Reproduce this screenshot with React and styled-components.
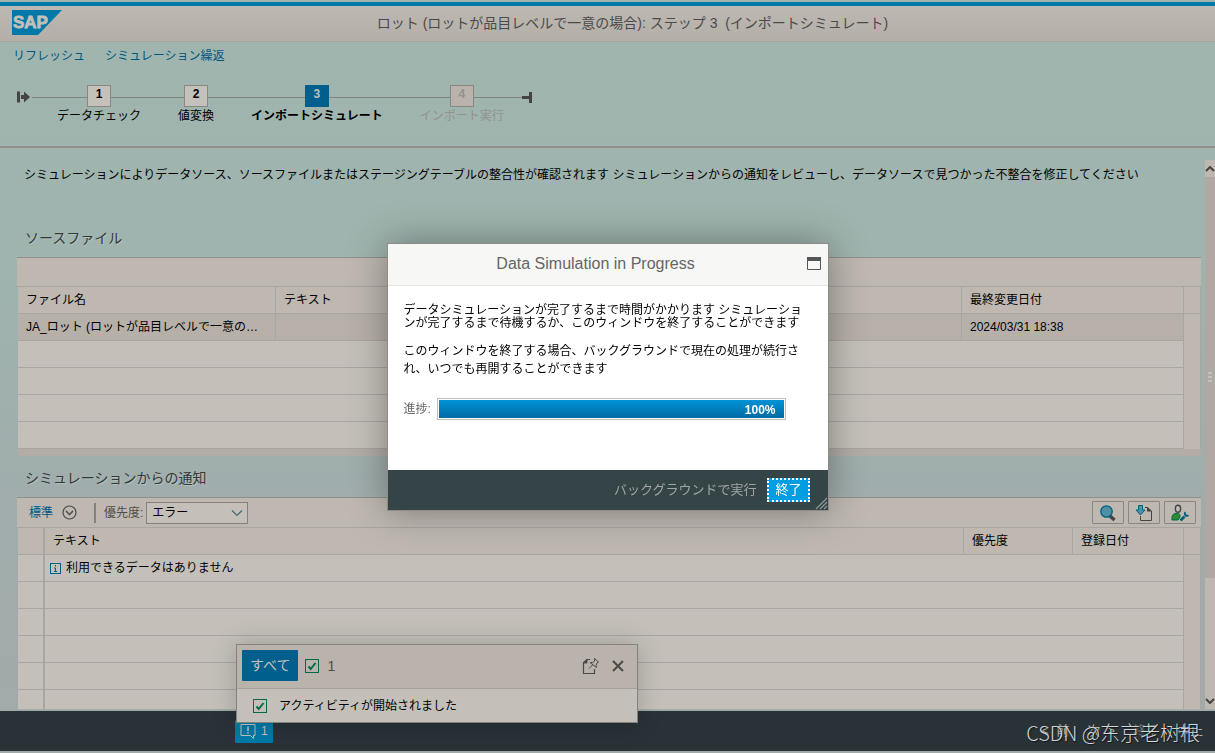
import styled, { createGlobalStyle, css } from 'styled-components';

const GlobalStyle = createGlobalStyle`
  * {
    box-sizing: border-box;
  }

  body {
    margin: 0;
    font-family: "Liberation Sans", "Noto Sans CJK JP", sans-serif;
    font-size: 12px;
    line-height: 18px;
    color: #000000;
  }

  button, select {
    font: inherit;
    cursor: pointer;
  }

  svg {
    display: block;
    flex: none;
  }
`;

const Page = styled.div`
  position: relative;
  display: flex;
  flex-direction: column;
  height: 100vh;
  padding: 2px 0;
  overflow: hidden;
  background: linear-gradient(#9fb5ae 0%, #9fb4ae 35%, #a0adac 65%, #a2a9a9 100%);
`;

const TopBar = styled.header`
  display: flex;
  align-items: center;
  height: 40px;
  padding: 4px 12px 0;
  border-top: 4px solid #0079a8;
  border-bottom: 1px solid #aaa49e;
  background: linear-gradient(#beb8b2, #b4aea8);
`;

const PageTitle = styled.h1`
  flex: 1;
  margin: 0;
  padding-bottom: 6px;
  font-size: 14px;
  font-weight: 400;
  line-height: 20px;
  text-align: center;
  white-space: pre;
  color: #4b4a48;
`;

const Logo = styled.svg`
  margin-bottom: 6px;
`;

const Actions = styled.nav`
  display: flex;
  gap: 20px;
  padding: 5px 13px 0;
`;

const ActionLink = styled.a`
  color: #00557f;
  text-decoration: none;
`;

const Roadmap = styled.div`
  display: flex;
  padding: 20px 17px 0;
  height: 83px;
  border-bottom: 2px solid #938f8a;
`;

const RoadmapTrack = styled.div`
  display: flex;
  align-items: flex-start;
  background: linear-gradient(#85847f, #85847f) 15px 12px / calc(100% - 24px) 1px no-repeat;

  > svg {
    margin-top: 6px;
  }
`;

const Steps = styled.ol`
  display: flex;
  gap: 37px;
  margin: 0;
  padding: 0 18px 0 27px;
  list-style: none;
`;

const Step = styled.li`
  display: flex;
  flex-direction: column;
  align-items: center;
  color: ${(props) => (props.$state === 'disabled' ? '#93928c' : '#000000')};
  font-weight: ${(props) => (props.$state === 'active' ? 700 : 400)};
`;

const StepBox = styled.span`
  width: 24px;
  height: 22px;
  border: 1px solid #8b8780;
  background: #c4c0ba;
  font-weight: 700;
  line-height: 16px;
  text-align: center;

  ${(props) =>
    props.$state === 'active' &&
    css`
      border-color: #005f8c;
      background: #005f8c;
      color: #c4c0ba;
    `}

  ${(props) =>
    props.$state === 'disabled' &&
    css`
      background: #b9b3ac;
    `}
`;

const Content = styled.main`
  display: flex;
  flex: 1;
  min-height: 0;
`;

const ScrollArea = styled.div`
  flex: 1;
  min-width: 0;
  overflow: hidden;
  padding: 18px 4px 0 17px;
`;

const Intro = styled.p`
  margin: 0 0 44px;
  padding-left: 7px;
`;

const SectionTitle = styled.h2`
  margin: 0;
  padding: 0 8px 9px;
  font-size: 14px;
  font-weight: 400;
  line-height: 20px;
  color: #33383a;
  text-shadow: 1px 1px 0 #b3c0bc;
`;

const Panel = styled.section`
  margin-bottom: 12px;
`;

const Toolbar = styled.div`
  display: flex;
  align-items: center;
  min-height: 30px;
  padding: 3px 5px 3px 12px;
  border-top: 1px solid #918f8b;
  border-bottom: 1px solid #a9a5a0;
  background: #beb8b1;
`;

const GridTable = styled.table`
  width: calc(100% - 1px);
  margin-left: 1px;
  table-layout: fixed;
  border-collapse: separate;
  border-spacing: 0;
  background: #c4c0b9;
`;

const Column = styled.col`
  width: ${(props) => (props.$width ? `${props.$width}px` : 'auto')};
`;

const HeadCell = styled.th`
  height: 27px;
  padding: 0 8px;
  border-right: ${(props) => (props.$selector ? 2 : 1)}px solid #a9a5a0;
  border-bottom: 1px solid #a9a5a0;
  background: #beb8b1;
  font-weight: 400;
  text-align: left;
`;

const Cell = styled.td`
  height: 27px;
  padding: 0 8px;
  border-right: 1px solid #a9a5a0;
  border-bottom: 1px solid #a9a5a0;
  background: ${(props) => (props.$selected ? '#b7b0a9' : 'transparent')};
  white-space: nowrap;
  overflow: hidden;
  text-overflow: ellipsis;
`;

const SelectorCell = styled(Cell)`
  border-right: 2px solid #a9a5a0;
`;

const GutterCell = styled.td`
  padding: 0;
  border-right: 1px solid #a9a5a0;
  background: #beb8b1;
`;

const PanelFoot = styled.div`
  height: 7px;
  margin-left: 1px;
  background: #b3ada6;
`;

const EmptyNote = styled.span`
  display: flex;
  align-items: center;
  gap: 5px;
  margin-left: -3px;
`;

const ViewButton = styled.button`
  display: flex;
  align-items: center;
  gap: 9px;
  padding: 0 17px 0 0;
  border: 0;
  border-right: 2px solid #85817c;
  height: 20px;
  background: none;
  color: #00557f;
`;

const FilterLabel = styled.label`
  padding: 0 3px 0 8px;
  color: #4f4d4a;
`;

const SelectBox = styled.div`
  position: relative;

  svg {
    position: absolute;
    top: 7px;
    right: 5px;
    pointer-events: none;
  }
`;

const Select = styled.select`
  display: block;
  width: 102px;
  height: 22px;
  padding: 0 20px 0 5px;
  border: 1px solid #85817c;
  border-radius: 0;
  appearance: none;
  background: #c4c0b9;
  color: #000000;
`;

const ToolButtons = styled.div`
  display: flex;
  gap: 4px;
  margin-left: auto;
`;

const ToolButton = styled.button`
  display: flex;
  align-items: center;
  justify-content: center;
  width: 32px;
  height: 23px;
  padding: 0;
  border: 1px solid #8a8680;
  border-radius: 1px;
  background: #beb8b1;
`;

const Scrollbar = styled.div`
  display: flex;
  flex-direction: column;
  width: 10px;
  margin-top: 12px;
  background: #beb8b1;
`;

const ScrollArrow = styled.span`
  display: flex;
  align-items: center;
  justify-content: center;
  height: 17px;
`;

const ScrollThumb = styled.div`
  display: flex;
  flex-direction: column;
  align-items: center;
  justify-content: center;
  gap: 2px;
  height: 73%;
  margin-bottom: auto;
  background: #afa8a3;
`;

const Grip = styled.i`
  width: 4px;
  height: 2px;
  background: #c6c1bb;
`;

const Footer = styled.footer`
  display: flex;
  align-items: center;
  justify-content: space-between;
  height: 40px;
  margin-top: 2px;
  padding: 0 12px 0 235px;
  background: #283237;
`;

const MessageButton = styled.button`
  display: flex;
  align-items: center;
  gap: 4px;
  height: 23px;
  padding: 0 5px;
  border: 0;
  border-radius: 1px;
  background: #0079a8;
  color: #c4c0b9;
`;

const FooterButtons = styled.div`
  display: flex;
  gap: 18px;
`;

const FooterButton = styled.button`
  padding: 0;
  border: 0;
  background: none;
  font-size: 13px;
  color: ${(props) => (props.disabled ? '#6d7274' : '#b5b2ad')};
`;

const Watermark = styled.div`
  position: absolute;
  right: 15px;
  bottom: 6px;
  font-family: "Noto Sans CJK SC", sans-serif;
  font-size: 20px;
  font-weight: 300;
  line-height: 28px;
  color: #d2d4d5;
  text-shadow: 1px 1px 1px #111618;
  pointer-events: none;
`;

const MessagePopup = styled.section`
  position: absolute;
  left: 236px;
  bottom: 30px;
  width: 402px;
  border: 1px solid #85827d;
  background: #c4c0b9;
  box-shadow: 0 0 24px rgba(0, 0, 0, 0.2);
`;

const PopupHeader = styled.div`
  display: flex;
  align-items: center;
  height: 44px;
  padding: 0 13px 2px 5px;
  border-bottom: 1px solid #a5a19b;
  background: #b9b3ac;
  font-size: 14px;
  color: #4f4d4a;
`;

const AllButton = styled.button`
  height: 31px;
  margin-right: 7px;
  padding: 0 8px 2px;
  border: 0;
  border-radius: 1px;
  background: #005f8c;
  color: #c4c0b9;
`;

const MessageCount = styled.span`
  flex: 1;
  padding-left: 8px;
`;

const IconButton = styled.button`
  display: flex;
  margin-left: 12px;
  padding: 0;
  border: 0;
  background: none;
`;

const PopupMessage = styled.p`
  display: flex;
  align-items: center;
  gap: 12px;
  height: 33px;
  margin: 0;
  padding-left: 16px;
`;

const Overlay = styled.div`
  position: fixed;
  inset: 0;
  display: flex;
  align-items: center;
  justify-content: center;
`;

const Dialog = styled.div`
  position: relative;
  width: 442px;
  border: 1px solid #8f8c88;
  background: #ffffff;
  box-shadow: 0 0 36px rgba(0, 0, 0, 0.35);
`;

const DialogHeader = styled.div`
  display: flex;
  align-items: center;
  height: 42px;
  padding: 0 7px 2px 9px;
  border-bottom: 1px solid #e5e5e3;
  background: #f7f7f5;
`;

const DialogTitle = styled.h2`
  flex: 1;
  margin: 0;
  padding-top: 2px;
  font-size: 16px;
  font-weight: 400;
  line-height: 20px;
  text-align: center;
  color: #666666;
`;

const DialogBody = styled.div`
  padding: 18px 23px 50px 16px;
`;

const DialogLead = styled.p`
  margin: 0 0 12px;
  line-height: 13px;
`;

const DialogText = styled.p`
  margin: 0 0 20px;
`;

const ProgressRow = styled.div`
  display: flex;
  align-items: center;
  gap: 6px;
  padding-right: 19px;
  color: #666666;
`;

const ProgressBar = styled.div`
  flex: 1;
  height: 22px;
  padding: 1px;
  border: 1px solid #bfbfbf;
`;

const ProgressFill = styled.div`
  height: 18px;
  padding-right: 8px;
  background: linear-gradient(#0092d6, #006ca3);
  color: #ffffff;
  font-weight: 700;
  line-height: 20px;
  text-align: right;
`;

const DialogFooter = styled.div`
  display: flex;
  align-items: center;
  justify-content: flex-end;
  gap: 11px;
  height: 40px;
  padding: 0 18px 0 0;
  background: #354447;
`;

const DialogButton = styled.button`
  height: 24px;
  padding: 0;
  border: 0;
  background: none;
  font-size: 13px;
  color: #a2a6a5;

  ${(props) =>
    props.$primary &&
    css`
      padding: 0 6px;
      border: 2px dotted #ffffff;
      background: #009de0;
      color: #ffffff;
    `}
`;

const ResizeHandle = styled.svg`
  position: absolute;
  right: 0;
  bottom: 0;
`;

const CheckIcon = () => (
  <svg width="14" height="14" viewBox="0 0 14 14" fill="none" stroke="#006b46">
    <rect x="0.5" y="0.5" width="13" height="13" />
    <path d="M3.5 7.5l2.2 2.5 4.8-6" strokeWidth="2" />
  </svg>
);

const ChevronDown = () => (
  <svg width="12" height="8" viewBox="0 0 12 8" fill="none" stroke="#45686f" strokeWidth="1.2">
    <path d="M1 1.5l5 5 5-5" />
  </svg>
);

const ScrollIcon = ({ d }) => (
  <svg width="10" height="6" viewBox="0 0 10 6" fill="none" stroke="#454442" strokeWidth="2">
    <path d={d} />
  </svg>
);

const steps = [
  { label: 'データチェック' },
  { label: '値変換' },
  { label: 'インポートシミュレート', state: 'active' },
  { label: 'インポート実行', state: 'disabled' },
];

const App = () => {
  const progress = 100;

  return (
    <Page lang="ja">
      <GlobalStyle />
      <TopBar>
        <Logo width="50" height="25" viewBox="0 0 50 25" role="img" aria-label="SAP">
          <path d="M0 0h50L26 25H0z" fill="#0079a8" />
          <text x="1" y="18" fontSize="17" fontWeight="700" fill="#c4c0ba" stroke="#c4c0ba" strokeWidth="0.8">
            SAP
          </text>
        </Logo>
        <PageTitle>{'ロット (ロットが品目レベルで一意の場合): ステップ 3  (インポートシミュレート)'}</PageTitle>
      </TopBar>

      <Actions>
        <ActionLink href="#refresh">リフレッシュ</ActionLink>
        <ActionLink href="#repeat">シミュレーション繰返</ActionLink>
      </Actions>

      <Roadmap>
        <RoadmapTrack>
          <svg width="13" height="12" viewBox="0 0 13 12" fill="#454442">
            <path d="M0 0.500h3v11H0zM4 4h3V0.500L13 6l-6 5.500V8H4z" />
          </svg>
          <Steps>
            {steps.map((step, i) => (
              <Step key={step.label} $state={step.state}>
                <StepBox $state={step.state}>{i + 1}</StepBox>
                {step.label}
              </Step>
            ))}
          </Steps>
          <svg width="10" height="12" viewBox="0 0 10 12" fill="#454442">
            <path d="M0 5h7v3H0zM7 1h3v11H7z" />
          </svg>
        </RoadmapTrack>
      </Roadmap>

      <Content>
        <ScrollArea>
          <Intro>
            シミュレーションによりデータソース、ソースファイルまたはステージングテーブルの整合性が確認されます シミュレーションからの通知をレビューし、データソースで見つかった不整合を修正してください
          </Intro>

          <Panel>
            <SectionTitle>ソースファイル</SectionTitle>
            <Toolbar />
            <GridTable>
              <colgroup>
                <Column $width={258} />
                <Column />
                <Column $width={222} />
                <Column $width={17} />
              </colgroup>
              <thead>
                <tr>
                  <HeadCell>ファイル名</HeadCell>
                  <HeadCell>テキスト</HeadCell>
                  <HeadCell>最終変更日付</HeadCell>
                  <HeadCell />
                </tr>
              </thead>
              <tbody>
                <tr>
                  <Cell $selected>JA_ロット (ロットが品目レベルで一意の場合)</Cell>
                  <Cell $selected />
                  <Cell $selected>2024/03/31 18:38</Cell>
                  <GutterCell rowSpan={5} />
                </tr>
                {[1, 2, 3, 4].map((row) => (
                  <tr key={row}>
                    <Cell colSpan={3} />
                  </tr>
                ))}
              </tbody>
            </GridTable>
            <PanelFoot />
          </Panel>

          <Panel>
            <SectionTitle>シミュレーションからの通知</SectionTitle>
            <Toolbar>
              <ViewButton>
                標準
                <svg width="15" height="15" viewBox="0 0 15 15" fill="none" stroke="#4b4a48">
                  <circle cx="7.5" cy="7.5" r="6.5" strokeWidth="1.2" />
                  <path d="M4 6l3.5 3.5L11 6" strokeWidth="1.5" />
                </svg>
              </ViewButton>
              <FilterLabel htmlFor="priority">優先度:</FilterLabel>
              <SelectBox>
                <Select id="priority" defaultValue="error">
                  <option value="error">エラー</option>
                </Select>
                <ChevronDown />
              </SelectBox>
              <ToolButtons>
                <ToolButton aria-label="検索">
                  <svg width="18" height="18" viewBox="0 0 18 18">
                    <path d="M11 12l4.5 4" stroke="#454442" strokeWidth="3.5" />
                    <circle cx="7.5" cy="7.5" r="5.7" fill="#4f90a6" stroke="#00607f" strokeWidth="1.3" />
                  </svg>
                </ToolButton>
                <ToolButton aria-label="エクスポート">
                  <svg width="18" height="18" viewBox="0 0 18 18" fill="none">
                    <path d="M5.5 12v4.500h11V7l-4-3.500H10" stroke="#454442" />
                    <path d="M12 3v4.500h5z" fill="#454442" />
                    <path d="M3.500 1.500h4V6H10L5.500 11 1 6h2.500z" fill="#4f90a6" stroke="#00607f" />
                  </svg>
                </ToolButton>
                <ToolButton aria-label="個人設定">
                  <svg width="18" height="18" viewBox="0 0 18 18" fill="none">
                    <path d="M1 16v-2.500c0-2.500 1.500-4 4-4h1.500c1.500 0 2.500.8 2.500 2v1.500L7 16z" fill="#2b8a35" stroke="#006b46" />
                    <ellipse cx="7" cy="4.800" rx="2.600" ry="3.500" fill="#c4c0b9" stroke="#454442" strokeWidth="1.4" />
                    <path d="M9.500 16.500l4-4" stroke="#00607f" strokeWidth="2.600" />
                    <path d="M14.500 8.200a2 2 0 1 0 3 3" stroke="#00607f" strokeWidth="2" />
                  </svg>
                </ToolButton>
              </ToolButtons>
            </Toolbar>
            <GridTable>
              <colgroup>
                <Column $width={27} />
                <Column />
                <Column $width={109} />
                <Column $width={111} />
                <Column $width={17} />
              </colgroup>
              <thead>
                <tr>
                  <HeadCell $selector />
                  <HeadCell>テキスト</HeadCell>
                  <HeadCell>優先度</HeadCell>
                  <HeadCell>登録日付</HeadCell>
                  <HeadCell />
                </tr>
              </thead>
              <tbody>
                <tr>
                  <SelectorCell />
                  <Cell colSpan={3}>
                    <EmptyNote>
                      <svg width="11" height="11" viewBox="0 0 11 11" fill="none" stroke="#00607f">
                        <rect x="0.5" y="0.5" width="10" height="10" />
                        <path d="M5.5 2v1.500M4 5h1.500v3.500M4 8.500h3" />
                      </svg>
                      利用できるデータはありません
                    </EmptyNote>
                  </Cell>
                  <GutterCell rowSpan={8} />
                </tr>
                {[1, 2, 3, 4, 5, 6, 7].map((row) => (
                  <tr key={row}>
                    <SelectorCell />
                    <Cell colSpan={3} />
                  </tr>
                ))}
              </tbody>
            </GridTable>
          </Panel>
        </ScrollArea>

        <Scrollbar>
          <ScrollArrow>
            <ScrollIcon d="M1 5l4-4 4 4" />
          </ScrollArrow>
          <ScrollThumb>
            <Grip />
            <Grip />
            <Grip />
          </ScrollThumb>
          <ScrollArrow>
            <ScrollIcon d="M1 1l4 4 4-4" />
          </ScrollArrow>
        </Scrollbar>
      </Content>

      <Footer>
        <MessageButton aria-label="メッセージ 1">
          <svg width="17" height="17" viewBox="0 0 17 17" fill="none" stroke="#c4c0b9">
            <path d="M1 1.500h14v11h-1.500v3l-3-3H1z" />
            <path d="M8 3.500v4.500M8 9v1.500" strokeWidth="1.600" />
          </svg>
          1
        </MessageButton>
        <FooterButtons>
          <FooterButton>&lt;&nbsp; 前</FooterButton>
          <FooterButton>次 &nbsp;&gt;</FooterButton>
          <FooterButton disabled>終了</FooterButton>
          <FooterButton>中止</FooterButton>
        </FooterButtons>
      </Footer>

      <MessagePopup>
        <PopupHeader>
          <AllButton>すべて</AllButton>
          <CheckIcon />
          <MessageCount>1</MessageCount>
          <IconButton aria-label="固定">
            <svg width="18" height="18" viewBox="0 0 18 18" fill="none" stroke="#4b4a48">
              <path d="M8 2.500H5l-3.500 3V16.500h11V12" strokeWidth="1.200" />
              <path d="M5 2v4H1.500z" fill="#4b4a48" />
              <path d="M12.500 1.500l4 3.500-1.500 1-1 2.500.5 2L8 5.500l2.500.2 2-1.500zM10.500 8L7 11.500" />
            </svg>
          </IconButton>
          <IconButton aria-label="閉じる">
            <svg width="12" height="12" viewBox="0 0 12 12" stroke="#4b4a48" strokeWidth="2">
              <path d="M1 1l10 10M11 1L1 11" />
            </svg>
          </IconButton>
        </PopupHeader>
        <PopupMessage>
          <CheckIcon />
          アクティビティが開始されました
        </PopupMessage>
      </MessagePopup>

      <Watermark lang="zh-CN">CSDN @东京老树根</Watermark>

      <Overlay>
        <Dialog role="dialog" aria-labelledby="dialog-title">
          <DialogHeader>
            <DialogTitle id="dialog-title">Data Simulation in Progress</DialogTitle>
            <IconButton aria-label="最大化">
              <svg width="14" height="13" viewBox="0 0 14 13" fill="none" stroke="#555555">
                <path d="M0.5 0.5h13v12h-13z" />
                <path d="M0 2h14" strokeWidth="4" />
              </svg>
            </IconButton>
          </DialogHeader>
          <DialogBody>
            <DialogLead>
              データシミュレーションが完了するまで時間がかかります シミュレーションが完了するまで待機するか、このウィンドウを終了することができます
            </DialogLead>
            <DialogText>
              このウィンドウを終了する場合、バックグラウンドで現在の処理が続行され、いつでも再開することができます
            </DialogText>
            <ProgressRow>
              <span id="progress-label">進捗:</span>
              <ProgressBar role="progressbar" aria-labelledby="progress-label" aria-valuenow={progress}>
                <ProgressFill style={{ width: `${progress}%` }}>{progress}%</ProgressFill>
              </ProgressBar>
            </ProgressRow>
          </DialogBody>
          <DialogFooter>
            <DialogButton>バックグラウンドで実行</DialogButton>
            <DialogButton $primary>終了</DialogButton>
          </DialogFooter>
          <ResizeHandle width="14" height="14" viewBox="0 0 14 14" stroke="#8f9899" strokeWidth="1.200">
            <path d="M2 13L13 2M6 13l7-7M10 13l3-3" />
          </ResizeHandle>
        </Dialog>
      </Overlay>
    </Page>
  );
};

export default App;
